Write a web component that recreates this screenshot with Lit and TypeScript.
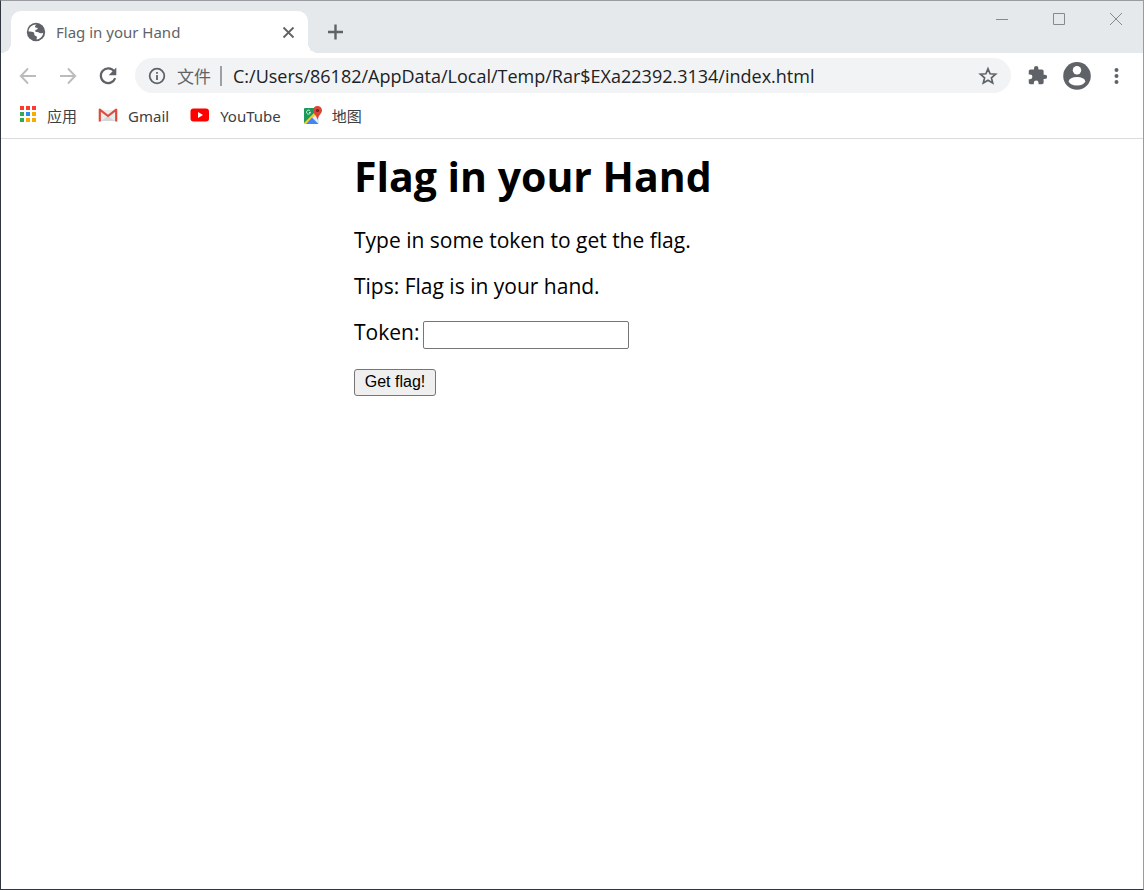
import { LitElement, html, svg, css } from "lit";
import { customElement, state } from "lit/decorators.js";

@customElement("browser-tabs")
class BrowserTabs extends LitElement {
  static styles = css`
    :host { display: flex; justify-content: space-between; height: 52px; background: #e5e9ec; font: 15px/24px "Noto Sans", sans-serif; color: #5f6368; }
    * { box-sizing: border-box; }
    svg { display: block; }
    button { border: 0; padding: 0; background: none; color: inherit; font: inherit; }
    .left { display: flex; align-items: flex-end; min-width: 0; padding-left: 10px; }
    .tab { position: relative; display: flex; align-items: center; width: 297px; height: 42px; padding: 0 12px 0 15px; background: #fff; border-radius: 10px 10px 0 0; }
    .tab::before, .tab::after { content: ""; position: absolute; bottom: 0; width: 10px; height: 10px; }
    .tab::before { right: 100%; background: radial-gradient(circle at 0 0, transparent 10px, #fff 10px); }
    .tab::after { left: 100%; background: radial-gradient(circle at 100% 0, transparent 10px, #fff 10px); }
    .title { flex: 1; margin-left: 10px; white-space: nowrap; }
    .new { margin: 0 0 13px 20px; }
    .controls { display: flex; padding-top: 11px; gap: 43px; margin-right: 20px; color: #868a8d; }
    .controls button { height: 14px; }
  `;
  render() {
    return html`
      <div class="left">
        <div class="tab">
          <svg width="20" height="20" viewBox="0 0 20 20"><circle cx="10" cy="10" r="9.2" fill="#5f6368"/><path d="M10.6 2.6c-1.300.9-2 2-1.400 2.700.6.8 1.800.1 2.400.8.5.7-.3 1.700-1.300 1.700-.8 0-1.100.5-1.100 1.200 0 .8.8.9 1.900 1 1.600.1 2.100 1.100 3.200 1.300 1.100.1 1.900-.2 2.900-.6-.3 3.500-2.900 6.300-6.500 6.800-.3-1 .3-1.700.2-2.500-.2-1-1.700-1-2.300-1.700-.7-.9.100-2-.7-2.900-.9-.9-3.400-1-5.400-1C2.700 5.600 6 2.500 10.600 2.600z" fill="#fff"/></svg>
          <span class="title">Flag in your Hand</span>
          <button aria-label="Close tab"><svg width="16" height="16" viewBox="0 0 16 16"><path d="M3.500 3.500l10 10M13.500 3.500l-10 10" stroke="currentColor" stroke-width="1.800"/></svg></button>
        </div>
        <button class="new" aria-label="New tab"><svg width="16" height="16" viewBox="0 0 16 16"><path d="M7.500 .5v15M0 8h15" stroke="currentColor" stroke-width="2.400"/></svg></button>
      </div>
      <div class="controls">
        <button aria-label="Minimize"><svg width="14" height="14" viewBox="0 0 14 14"><path d="M1 7.500h12" stroke="currentColor"/></svg></button>
        <button aria-label="Maximize"><svg width="14" height="14" viewBox="0 0 14 14"><path d="M1.500 1.500h11v11h-11z" stroke="currentColor" fill="none"/></svg></button>
        <button aria-label="Close"><svg width="14" height="14" viewBox="0 0 14 14"><path d="M1 1l12 12M13 1L1 13" stroke="currentColor"/></svg></button>
      </div>`;
  }
}

@customElement("browser-toolbar")
class BrowserToolbar extends LitElement {
  static styles = css`
    :host { display: flex; align-items: center; height: 45px; padding: 0 17px 0 15px; color: #5f6368; background: #fff; }
    * { box-sizing: border-box; }
    svg { display: block; }
    button { border: 0; padding: 0; background: none; color: inherit; }
    .nav { display: flex; gap: 16px; margin-right: 15px; }
    .off { color: #babcbe; }
    .omnibox { display: flex; flex: 1; align-items: center; min-width: 0; height: 35px; padding: 0 13px 0 12px; border-radius: 18px; background: #f1f3f4; font: 18px/24px "Open Sans", "Noto Sans", sans-serif; }
    .scheme { margin-left: 10px; padding-right: 9px; font: 17px/20px "Noto Sans CJK SC", sans-serif; border-right: 2px solid #9aa0a6; white-space: nowrap; }
    .url { flex: 1; min-width: 0; margin: 0 12px 0 11px; padding: 0; border: 0; outline: 0; background: none; font: inherit; color: #202124; }
    .actions { display: flex; align-items: center; gap: 15px; margin-left: 16px; }
  `;
  render() {
    return html`
      <div class="nav">
        <button class="off" aria-label="Back"><svg width="24" height="24" viewBox="0 0 24 24"><path d="M20 12H5M12 4.500L4.800 12l7.200 7.500" fill="none" stroke="currentColor" stroke-width="1.900"/></svg></button>
        <button class="off" aria-label="Forward"><svg width="24" height="24" viewBox="0 0 24 24"><path d="M4 12h15M12 4.500l7.200 7.500-7.200 7.500" fill="none" stroke="currentColor" stroke-width="1.900"/></svg></button>
        <button aria-label="Reload"><svg width="24" height="24" viewBox="0 0 24 24"><path d="M18.200 7.300A7.400 7.400 0 1 0 19.200 14.200" fill="none" stroke="currentColor" stroke-width="2.200"/><path d="M20.300 3.600v7.600h-7.600z" fill="currentColor"/></svg></button>
      </div>
      <div class="omnibox">
        <svg width="20" height="20" viewBox="0 0 20 20"><circle cx="10" cy="10" r="7.300" fill="none" stroke="currentColor" stroke-width="1.800"/><path d="M9.100 9h1.800v5H9.100zM9.100 6h1.800v1.800H9.100z" fill="currentColor"/></svg>
        <span class="scheme">文件</span>
        <input class="url" aria-label="Address" .value=${"C:/Users/86182/AppData/Local/Temp/Rar$EXa22392.3134/index.html"} spellcheck="false">
        <button aria-label="Bookmark this page"><svg width="20" height="20" viewBox="0 0 20 20"><path d="M10 2.800l2.100 5 5.500.4-4.200 3.600 1.300 5.300L10 14.300l-4.700 2.800 1.300-5.300-4.200-3.600 5.500-.4z" fill="none" stroke="currentColor" stroke-width="1.700"/></svg></button>
      </div>
      <div class="actions">
        <button aria-label="Extensions"><svg width="21" height="21" viewBox="0 0 24 24"><path d="M20.500 11H19V7c0-1.100-.9-2-2-2h-4V3.500a2.500 2.500 0 0 0-5 0V5H4c-1.100 0-2 .9-2 2v3.800h1.500a2.700 2.700 0 0 1 0 5.400H2V20c0 1.100.9 2 2 2h3.800v-1.500a2.700 2.700 0 0 1 5.400 0V22H17c1.100 0 2-.9 2-2v-4h1.500a2.500 2.500 0 0 0 0-5z" fill="currentColor"/></svg></button>
        <button aria-label="Profile"><svg width="28" height="28" viewBox="0 0 28 28"><circle cx="14" cy="13.900" r="13.800" fill="currentColor"/><circle cx="14" cy="8.200" r="4.200" fill="#fff"/><ellipse cx="14" cy="19.200" rx="8.200" ry="4.200" fill="#fff"/></svg></button>
        <button aria-label="Menu"><svg width="20" height="20" viewBox="0 0 20 20"><circle cx="10.500" cy="4" r="2" fill="currentColor"/><circle cx="10.500" cy="10" r="2" fill="currentColor"/><circle cx="10.500" cy="16" r="2" fill="currentColor"/></svg></button>
      </div>`;
  }
}

const appDots = ["#ff3b30", "#ff3b30", "#ff3b30", "#34a853", "#2e8cf0", "#f9ab00", "#34a853", "#f9ab00", "#f9ab00"];

@customElement("bookmark-bar")
class BookmarkBar extends LitElement {
  static styles = css`
    :host { display: flex; align-items: center; height: 41px; padding: 0 16px 4px; gap: 21px; border-bottom: 1px solid #d9dbdd; box-sizing: border-box; background: #fff; }
    a { display: flex; align-items: center; gap: 10px; color: #3c4043; text-decoration: none; font: 15px/20px "Noto Sans", "Noto Sans CJK SC", sans-serif; white-space: nowrap; }
    svg { display: block; }
  `;
  render() {
    return html`
      <a href="#"><svg width="20" height="20" viewBox="0 0 20 20">${appDots.map((color, i) => svg`<rect x=${3 + (i % 3) * 6} y=${Math.floor(i / 3) * 6} width="4" height="4" fill=${color}></rect>`)}</svg>应用</a>
      <a href="#"><svg width="20" height="20" viewBox="0 0 20 20"><path d="M1 4h18v11H1z" fill="#ececec"/><path d="M3 15l7-5 7 5z" fill="#d6d6d6"/><path d="M1.800 15.500V3.700L10 10l8.200-6.300v11.800" fill="none" stroke="#dc4b40" stroke-width="2.200" stroke-linejoin="round"/></svg>Gmail</a>
      <a href="#"><svg width="20" height="20" viewBox="0 0 20 20"><rect x=".5" y="2.500" width="18.500" height="13" rx="3" fill="#f00"/><path d="M8 6v6l5-3z" fill="#fff"/></svg>YouTube</a>
      <a href="#"><svg width="20" height="20" viewBox="0 0 20 20"><rect x="2" y="2" width="15" height="16" rx="1" fill="#1b9a59"/><path d="M3 18L17 4v14z" fill="#e8eaed"/><path d="M2 17L15 4l2 2L4 18H2z" fill="#fbcb2d"/><path d="M4 18l6-6.500 6.500 6.500z" fill="#4285f4"/><path d="M8.200 5a2 2 0 1 0 .3 1.500H7" fill="none" stroke="#d9f1e4" stroke-width="1"/><path d="M15.500 0a4.500 4.500 0 0 0-4.500 4.600c0 3.200 3.500 4.400 4.500 9.400 1-5 4.500-6.200 4.500-9.400A4.500 4.500 0 0 0 15.500 0z" fill="#dc4437"/><circle cx="15.500" cy="4.500" r="1.600" fill="#7b231d"/></svg>地图</a>`;
  }
}

@customElement("app-root")
class AppRoot extends LitElement {
  @state() token = "";
  static styles = css`
    :host { display: block; box-sizing: border-box; min-height: 100vh; background: #fff; border: 1px solid #303640; border-top-color: #999ca0; border-right-color: #9b9b9b; }
    main { max-width: 436px; margin: 0 auto; color: #000; font: 21px/28px "Open Sans", "Noto Sans", sans-serif; }
    h1 { margin: 0; padding-top: 9px; font-size: 41px; line-height: 56px; font-weight: 700; white-space: nowrap; }
    p { margin: 18px 0; }
    h1 + p { margin-top: 22px; }
    form p { display: flex; align-items: baseline; gap: 4px; margin-bottom: 16px; }
    input { box-sizing: border-box; width: 206px; height: 28px; padding: 1px 2px; border: 1px solid #767676; border-radius: 2px; font: 17px "Liberation Sans", sans-serif; }
    button { box-sizing: border-box; width: 82px; height: 27px; padding: 0; border: 1px solid #767676; border-radius: 3px; background: #efefef; color: #000; font: 16px/20px "Liberation Sans", sans-serif; }
  `;
  render() {
    return html`
      <browser-tabs></browser-tabs>
      <browser-toolbar></browser-toolbar>
      <bookmark-bar></bookmark-bar>
      <main>
        <h1>Flag in your Hand</h1>
        <p>Type in some token to get the flag.</p>
        <p>Tips: Flag is in your hand.</p>
        <form @submit=${(e: Event) => e.preventDefault()}>
          <p><label for="token">Token:</label><input id="token" type="text" .value=${this.token} @input=${(e: Event) => (this.token = (e.target as HTMLInputElement).value)}></p>
          <button type="submit">Get flag!</button>
        </form>
      </main>`;
  }
}
